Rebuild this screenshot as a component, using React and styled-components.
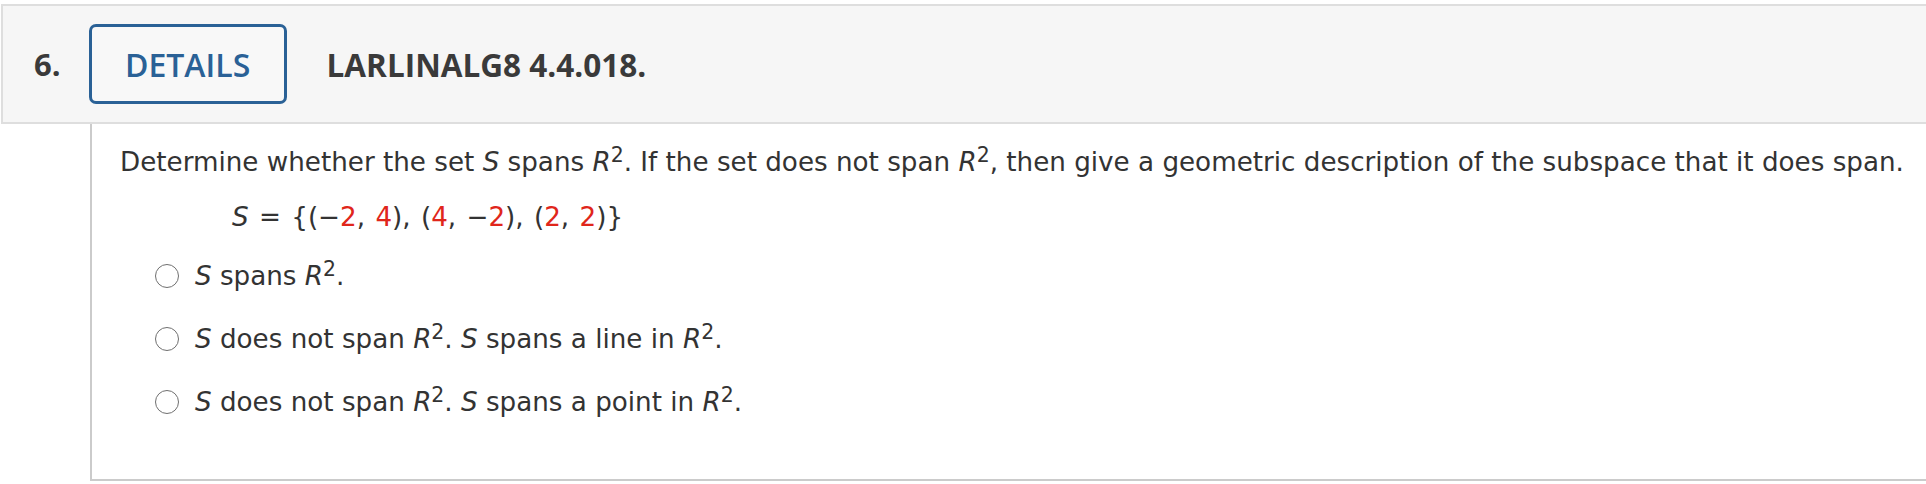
import styled, { createGlobalStyle } from "styled-components";

const GlobalStyle = createGlobalStyle`
  html, body {
    margin: 0;
    padding: 0;
    background: #fff;
    overflow: hidden;
  }
`;

const Page = styled.div`
  padding: 4px 0 0 1px;
  width: 1960px;
`;

const Header = styled.div`
  display: flex;
  align-items: center;
  height: 116px;
  background-color: #f6f6f6;
  border: 2px solid #dedede;
  font-family: "Open Sans", sans-serif;
  color: #3a3a3a;
`;

const Number = styled.span`
  margin-left: 31px;
  font-size: 31px;
  font-weight: 700;
`;

const DetailsButton = styled.button`
  margin-left: 28px;
  width: 198px;
  height: 80px;
  background-color: #f8f8f8;
  border: 3px solid #2a6196;
  border-radius: 7px;
  color: #2a6196;
  font-family: "Open Sans", sans-serif;
  font-size: 32px;
  font-weight: 600;
  padding: 0;
`;

const Title = styled.span`
  margin-left: 40px;
  font-size: 31.5px;
  font-weight: 700;
`;

const Body = styled.div`
  margin-left: 89px;
  height: 355px;
  border-left: 2px solid #cbcbcb;
  border-bottom: 2px solid #cbcbcb;
  padding: 0 0 0 28px;
  font-family: "DejaVu Sans", Verdana, sans-serif;
  font-size: 26.2px;
  color: #333;
`;

const Prompt = styled.p`
  margin: 0;
  padding-top: 23px;
  line-height: 30px;
  white-space: nowrap;
`;

const SetLine = styled.p`
  margin: 25px 0 0 112px;
  line-height: 30px;
  word-spacing: 2px;
`;

const Options = styled.div`
  display: flex;
  flex-direction: column;
  gap: 33px;
  margin: 29px 0 0 35px;
`;

const Option = styled.label`
  display: flex;
  align-items: center;
  line-height: 30px;
`;

const Radio = styled.span`
  flex: none;
  width: 22px;
  height: 22px;
  border: 1.5px solid #6f6f6f;
  border-radius: 50%;
  margin-right: 16px;
  background: #fff;
`;

const Var = styled.i`
  font-style: italic;
`;

const Sup = styled.sup`
  font-size: 0.78em;
  line-height: 0;
  vertical-align: 0.42em;
`;

const Red = styled.span`
  color: #e0261b;
`;

const R2 = () => (
  <>
    <Var>R</Var>
    <Sup>2</Sup>
  </>
);

const options = [
  <>
    <Var>S</Var> spans <R2 />.
  </>,
  <>
    <Var>S</Var> does not span <R2 />. <Var>S</Var> spans a line in <R2 />.
  </>,
  <>
    <Var>S</Var> does not span <R2 />. <Var>S</Var> spans a point in <R2 />.
  </>,
];

export default function App() {
  return (
    <Page>
      <GlobalStyle />
      <Header>
        <Number>6.</Number>
        <DetailsButton>DETAILS</DetailsButton>
        <Title>LARLINALG8 4.4.018.</Title>
      </Header>
      <Body>
        <Prompt>
          Determine whether the set <Var>S</Var> spans <R2 />. If the set does
          not span <R2 />, then give a geometric description of the subspace
          that it does span.
        </Prompt>
        <SetLine>
          <Var>S</Var> = {"{"}(−<Red>2</Red>, <Red>4</Red>), (<Red>4</Red>, −
          <Red>2</Red>), (<Red>2</Red>, <Red>2</Red>){"}"}
        </SetLine>
        <Options>
          {options.map((text, i) => (
            <Option key={i}>
              <Radio />
              <span>{text}</span>
            </Option>
          ))}
        </Options>
      </Body>
    </Page>
  );
}
